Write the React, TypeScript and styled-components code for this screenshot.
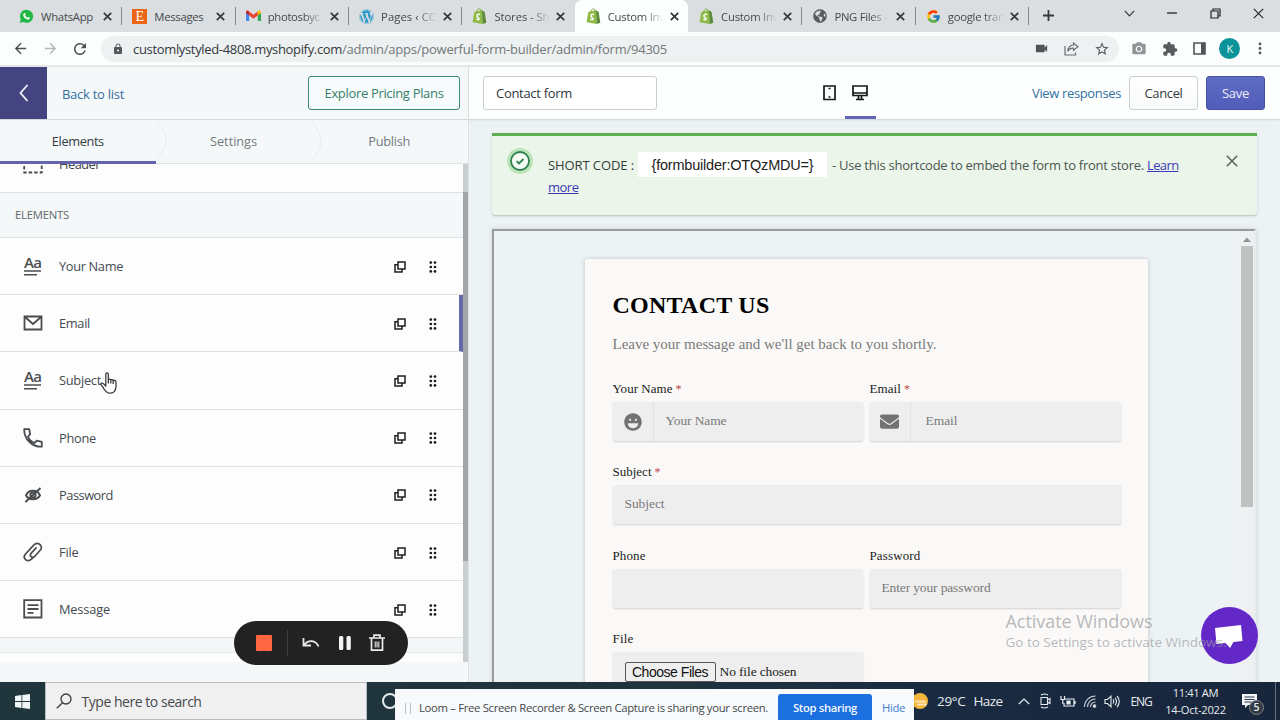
import React, { useLayoutEffect, useRef } from 'react';
import styled, { createGlobalStyle } from 'styled-components';
import { FaEnvelope, FaLaugh, FaWordpress, FaGlobeAmericas } from 'react-icons/fa';
import { FcGoogle } from 'react-icons/fc';
import { MdVideocam, MdCameraAlt, MdExtension, MdStarBorder, MdLock, MdRefresh, MdArrowBack, MdArrowForward } from 'react-icons/md';

const Global = createGlobalStyle`
  * { box-sizing: border-box; }
  body { margin: 0; font-family: 'Open Sans', 'Noto Sans', sans-serif; font-size: 13px; color: #3c4449; }
  svg { display: block; flex: none; }
`;

const FitSpan = styled.span`
  display: inline-block;
  white-space: pre;
  text-decoration: inherit;
`;

/* Text set to a given measure: tracking is computed from the natural width. */
function Fit({ w, children }: { w: number; children: string }) {
  const ref = useRef<HTMLSpanElement>(null);
  useLayoutEffect(() => {
    const el = ref.current;
    if (!el) return;
    el.style.letterSpacing = '0px';
    const natural = el.getBoundingClientRect().width;
    el.style.letterSpacing = `${(w - natural) / children.length}px`;
  }, [w, children]);
  return <FitSpan ref={ref}>{children}</FitSpan>;
}

const Screen = styled.div`
  position: relative;
  width: 1280px;
  height: 720px;
  overflow: hidden;
  display: flex;
  flex-direction: column;
  background: #edf3f4;
`;

/* ---------- browser ---------- */
const TabStrip = styled.div`
  flex: none;
  height: 32px;
  display: flex;
  padding-left: 8px;
  background: #dadee1;
`;
const Tab = styled.div<{ $active?: boolean; $line?: boolean }>`
  position: relative;
  flex: none;
  width: 113.350px;
  height: 32px;
  display: flex;
  align-items: center;
  padding-left: 11px;
  font-size: 11.300px;
  color: #45494d;
  border-radius: 7px 7px 0 0;
  background: ${p => (p.$active ? '#fdfefe' : 'transparent')};
  &::after {
    content: '';
    position: absolute;
    right: -1px;
    top: 7px;
    width: 1px;
    height: 18px;
    background: ${p => (p.$line ? '#84888b' : 'transparent')};
  }
`;
const TabIcon = styled.div`
  width: 15px;
  height: 16px;
  display: flex;
  align-items: center;
  justify-content: center;
`;
const TabTitle = styled.div<{ $fade?: boolean }>`
  width: 59px;
  margin-left: 7px;
  white-space: nowrap;
  ${p => p.$fade && 'mask-image: linear-gradient(90deg, #000 36px, transparent 56px);'}
`;
const TabClose = styled.div`
  margin-left: 3px;
`;
const EtsyMark = styled.div`
  width: 15px;
  height: 15px;
  background: #ec6512;
  color: #fff;
  font: 14px/15px 'Liberation Serif', serif;
  text-align: center;
`;
const NewTab = styled.div`
  padding: 10px 0 0 14.500px;
`;
const WindowButtons = styled.div`
  margin-left: auto;
  margin-right: 16px;
  height: 26px;
  display: flex;
  align-items: center;
  gap: 32.300px;
`;
const Toolbar = styled.div`
  flex: none;
  height: 35px;
  display: flex;
  align-items: center;
  background: #fcfefe;
  border-bottom: 2px solid #e3e7e8;
  color: #55595c;
`;
const NavIcons = styled.div`
  display: flex;
  align-items: center;
  gap: 12.500px;
  padding-left: 12px;
  width: 101px;
`;
const AddressBar = styled.div`
  width: 1018px;
  height: 26px;
  border-radius: 13px;
  margin-right: 12px;
  background: #eef1f1;
  display: flex;
  align-items: center;
  padding: 0 9px 0 11px;
  font-size: 13px;
  color: #72777a;
  b { font-weight: 400; color: #33383b; }
`;
const AddressText = styled.div`
  margin: 0 auto 0 9px;
  white-space: nowrap;
`;
const AddressIcons = styled.div`
  display: flex;
  align-items: center;
  gap: 15px;
`;
const ExtIcons = styled.div`
  display: flex;
  align-items: center;
  gap: 14.800px;
`;
const Avatar = styled.div`
  width: 21px;
  height: 21px;
  border-radius: 50%;
  background: #0c939a;
  color: #e8f7f7;
  font-size: 11px;
  line-height: 21px;
  text-align: center;
  margin: 0 -2px 0 -1px;
`;

function Bag() {
  return (
    <svg width="15" height="16" viewBox="0 0 15 16">
      <path d="M2.300 4 10 2.200 10.600 16 .6 14.200z" fill="#8dbb45" />
      <path d="M10 2.200 12.600 4l1.700 10.800-3.700 1.200z" fill="#5a8a35" />
      <path d="M4.400 5C4.600 2.600 6 .9 7.300.9c1.400 0 1.900 1.600 1.900 3" fill="none" stroke="#7daa3c" strokeWidth="1" />
      <path d="M8.100 6.600c-1.700-.8-3.200 0-3.200 1.400 0 1.600 2.400 1.600 2.300 2.900-.1 1.100-1.500 1.100-2.800.3" fill="none" stroke="#fff" strokeWidth="1.400" />
    </svg>
  );
}
function Gmail() {
  return (
    <svg width="15" height="12" viewBox="0 0 15 12">
      <path d="M0 1.500V11h3.200V4z" fill="#4285f4" />
      <path d="M15 1.500V11h-3.200V4z" fill="#34a853" />
      <path d="M3.200 1.400 7.500 4.700l4.300-3.300v4L7.500 8.700 3.200 5.400z" fill="#ea4335" />
      <path d="M0 2.200C0 .3 1.800-.2 3.200 1.400v4L0 3z" fill="#c5221f" />
      <path d="M15 2.200C15 .3 13.200-.2 11.800 1.400v4L15 3z" fill="#fbbc04" />
    </svg>
  );
}
function WhatsApp() {
  return (
    <svg width="15" height="15" viewBox="0 0 15 15">
      <path d="M7.600.8a6.500 6.500 0 0 1 0 13c-1.200 0-2.300-.3-3.200-.8L.8 14l1-3.500A6.500 6.500 0 0 1 7.600.8z" fill="#22b845" />
      <path d="M5 4.300c.5-.5 1-.4 1.200.1l.5 1.200-.6.9c.5 1 1.200 1.700 2.300 2.200l.9-.8 1.500.8c.2 1.300-.9 2-2 1.900C6.500 10.300 4.400 8 4.200 6.200c0-.8.3-1.400.8-1.900z" fill="#fff" />
    </svg>
  );
}
function Cross({ s = 9, c = '#33373a', w = 1.7 }: { s?: number; c?: string; w?: number }) {
  return (
    <svg width={s} height={s} viewBox={`0 0 ${s} ${s}`} stroke={c} strokeWidth={w}>
      <path d={`M.8.8 ${s - 0.8} ${s - 0.8}M${s - 0.8} .8 .8 ${s - 0.8}`} />
    </svg>
  );
}

const TABS: { icon: React.ReactNode; title: string; w: number; fade?: boolean; line?: boolean; active?: boolean }[] = [
  { icon: <WhatsApp />, title: 'WhatsApp', w: 52, line: true },
  { icon: <EtsyMark>E</EtsyMark>, title: 'Messages', w: 49, line: true },
  { icon: <Gmail />, title: 'photosbyc', w: 52, fade: true, line: true },
  { icon: <FaWordpress size={15} color="#2797c9" />, title: 'Pages ‹ CC', w: 55, fade: true, line: true },
  { icon: <Bag />, title: 'Stores - Sh', w: 55, fade: true },
  { icon: <Bag />, title: 'Custom Inv', w: 57, fade: true, active: true },
  { icon: <Bag />, title: 'Custom Inv', w: 57, fade: true, line: true },
  { icon: <FaGlobeAmericas size={14} color="#585c60" />, title: 'PNG Files -', w: 53, fade: true, line: true },
  { icon: <FcGoogle size={15} />, title: 'google tran', w: 57, fade: true, line: true },
];

function Browser() {
  return (
    <>
      <TabStrip>
        {TABS.map((t, i) => (
          <Tab key={i} $active={t.active} $line={t.line}>
            <TabIcon>{t.icon}</TabIcon>
            <TabTitle $fade={t.fade}><Fit w={t.w}>{t.title}</Fit></TabTitle>
            <TabClose><Cross /></TabClose>
          </Tab>
        ))}
        <NewTab>
          <svg width="11" height="11" stroke="#35393c" strokeWidth="1.800"><path d="M5.500 0v11M0 5.500h11" /></svg>
        </NewTab>
        <WindowButtons>
          <svg width="11" height="7" fill="none" stroke="#34383b" strokeWidth="1.200"><path d="M.8.800 5.500 5.800 10.200.8" /></svg>
          <svg width="10" height="2"><path d="M0 1h10" stroke="#222" strokeWidth="1.300" /></svg>
          <svg width="11" height="11" fill="none" stroke="#222" strokeWidth="1.200"><path d="M1 3h7v7H1zM3 3V1h7v7H8" /></svg>
          <Cross s={11} c="#222" w={1.1} />
        </WindowButtons>
      </TabStrip>
      <Toolbar>
        <NavIcons>
          <MdArrowBack size={17} color="#4c5053" />
          <MdArrowForward size={17} color="#b4b7b9" />
          <MdRefresh size={18} color="#4c5053" />
        </NavIcons>
        <AddressBar>
          <MdLock size={12} color="#54585b" />
          <AddressText>
            <b><Fit w={209}>customlystyled-4808.myshopify.com</Fit></b>
            <Fit w={325}>/admin/apps/powerful-form-builder/admin/form/94305</Fit>
          </AddressText>
          <AddressIcons>
            <MdVideocam size={15} color="#505457" />
            <svg width="15" height="14" viewBox="0 0 15 14" fill="none" stroke="#6b6f72" strokeWidth="1.200">
              <path d="M1 4v9h10.500v-2.500M9.500 1l4.500 3.700-4.500 3.600V6.200C7 6 5 7 3.800 9.300 4 5.600 6 3.300 9.500 3z" />
            </svg>
            <MdStarBorder size={16} color="#54585b" />
          </AddressIcons>
        </AddressBar>
        <ExtIcons>
          <MdCameraAlt size={16} color="#919496" />
          <MdExtension size={16} color="#585c5f" />
          <svg width="13" height="13"><path d="M1 1h11v11H1z" fill="none" stroke="#505457" strokeWidth="1.600" /><path d="M8 1h4v11H8z" fill="#505457" /></svg>
          <Avatar>K</Avatar>
          <svg width="14" height="13" fill="#54585b"><circle cx="7" cy="2" r="1.400" /><circle cx="7" cy="6.500" r="1.400" /><circle cx="7" cy="11" r="1.400" /></svg>
        </ExtIcons>
      </Toolbar>
    </>
  );
}

/* ---------- sidebar ---------- */
const Body = styled.div`
  height: 615px;
  display: flex;
`;
const Sidebar = styled.div`
  flex: none;
  width: 469px;
  display: flex;
  flex-direction: column;
  background: #f5f8f9;
  border-right: 1px solid #dce1e3;
`;
const SideHead = styled.div`
  flex: none;
  height: 53px;
  display: flex;
  align-items: center;
  border-bottom: 1px solid #d8dcdf;
  padding-right: 8px;
`;
const BackButton = styled.div`
  width: 47px;
  height: 52px;
  display: flex;
  align-items: center;
  justify-content: center;
  background: #444480;
`;
const BackLink = styled.div`
  margin: 1px auto 0 15px;
  color: #356f9f;
`;
const Button = styled.div<{ $kind?: 'primary' | 'outline' }>`
  height: 34px;
  display: flex;
  align-items: center;
  justify-content: center;
  border-radius: 3px;
  font-size: 13px;
  border: 1px solid ${p => (p.$kind === 'primary' ? '#4552a6' : p.$kind === 'outline' ? '#398870' : '#c9cfd3')};
  background: ${p => (p.$kind === 'primary' ? 'linear-gradient(#606bc3, #525dba)' : p.$kind === 'outline' ? '#f8fbfb' : 'linear-gradient(#fff, #f9fafb)')};
  color: ${p => (p.$kind === 'primary' ? '#eef0fc' : p.$kind === 'outline' ? '#35806a' : '#353c42')};
`;
const PricingButton = styled(Button)` width: 152px; `;
const CancelButton = styled(Button)` width: 69px; `;
const SaveButton = styled(Button)` width: 59px; `;
const SideTabs = styled.div`
  flex: none;
  height: 44px;
  display: flex;
  border-bottom: 1px solid #dfe3e6;
`;
const SideTab = styled.div<{ $active?: boolean }>`
  width: 155.700px;
  height: 44px;
  display: flex;
  align-items: center;
  justify-content: center;
  position: relative;
  font-size: 12.800px;
  color: ${p => (p.$active ? '#343c42' : '#747b80')};
  border-bottom: 3px solid ${p => (p.$active ? '#6265ad' : 'transparent')};
  svg { position: absolute; left: 100%; top: 0; }
`;
const ListArea = styled.div`
  height: 498px;
  flex: none;
  display: flex;
`;
const List = styled.div`
  width: 463px;
  overflow: hidden;
  background: #fdfdfd;
`;
const Scroll = styled.div`
  width: 5px;
  background: #c9cecf;
  padding-top: 28px;
`;
const ScrollThumb = styled.div`
  height: 369px;
  background: #a1a5a7;
`;
const HeaderRow = styled.div`
  height: 28px;
  display: flex;
  align-items: flex-end;
  gap: 16px;
  padding: 0 0 18px 23px;
  line-height: 18px;
  font-size: 12.800px;
  color: #40474c;
  span { margin-bottom: 1px; }
`;
const SectionTitle = styled.div`
  height: 46px;
  display: flex;
  align-items: center;
  padding: 0 0 2px 15px;
  background: #f5f8f9;
  border-top: 1px solid #dde1e3;
  border-bottom: 1px solid #dfe3e5;
  font-size: 11.300px;
  font-weight: 500;
  color: #5f676c;
`;
const Row = styled.div<{ $selected?: boolean }>`
  height: 57.200px;
  display: flex;
  align-items: center;
  padding: 0 ${p => (p.$selected ? 22.5 : 26.5)}px 0 23px;
  border-bottom: 1px solid #dfe2e4;
  border-right: ${p => (p.$selected ? '4px solid #6667a8' : '0')};
  font-size: 12.800px;
  color: #444b50;
`;
const RowLabel = styled.div`
  margin: 0 auto 0 16px;
`;
const RowTools = styled.div`
  display: flex;
  align-items: center;
  gap: 23px;
  padding-top: 1px;
`;
const SectionGap = styled.div`
  height: 15px;
  background: #f4f7f8;
  border-bottom: 1px solid #e3e6e8;
`;

const LINE = { fill: 'none', stroke: '#4a4d50', strokeWidth: 1.8 } as const;
const AaMark = styled.div`
  width: 20px;
  height: 20px;
  padding-left: 1px;
  font: 600 15px/12px 'Open Sans', sans-serif;
  color: #4c4f52;
  svg { margin-top: 2px; }
`;
const AaIcon = () => (
  <AaMark>
    <Fit w={17.5}>Aa</Fit>
    <svg width="18" height="6" {...LINE} strokeWidth={1.6}><path d="M0 1h17M0 4.800h13" /></svg>
  </AaMark>
);
const MailIcon = () => (
  <svg width="20" height="16" {...LINE}><path d="M1.500 1.500h17v13h-17zM2 2l8 7 8-7" /></svg>
);
const PhoneIcon = () => (
  <svg width="20" height="20" {...LINE} strokeLinejoin="round"><path d="M1.200 1.200h5l1 5L5 8.500c1 3 3.300 5.200 6.500 6.500l2.300-2.300 5 1.200v4.800C9 19 1 11 1.200 1.200z" /></svg>
);
const HiddenIcon = () => (
  <svg width="20" height="20" {...LINE} strokeWidth={2}>
    <path d="M3 10.300C5.500 4.300 14.500 4.300 17 10.300 14.500 15.500 5.500 15.500 3 10.300z" />
    <circle cx="10" cy="10" r="2.600" /><path d="M2.500 17 17.500 3" />
  </svg>
);
const ClipIcon = () => (
  <svg width="20" height="20" viewBox="0 0 20 20" {...LINE} strokeWidth={1.700} strokeLinecap="round" strokeLinejoin="round">
    <path d="m10.500 15.200-2 2c-4.300 3.800-9.500-1-6-5.200l8-8.700c4.200-4.300 10.500.5 6.700 5l-5.400 6c-2.700 2.500-5.800-.4-3.700-2.900l5-5.500" />
  </svg>
);
const MessageIcon = () => (
  <svg width="20" height="20" {...LINE}><path d="M1.200 1.200h17.300v17.300H1.200zM4.500 6.200h11M4.500 10h11M4.500 13.800h6" /></svg>
);
const CopyIcon = () => (
  <svg width="12" height="12" fill="none" stroke="#1c1e20" strokeWidth="1.500"><path d="M4 1h7v7H4zM3.800 3.800H1V11h7V8.200" /></svg>
);
const DragIcon = () => (
  <svg width="8" height="12" fill="#1a1c1e">
    {[1.6, 6, 10.4].map(y => [1.8, 6].map(x => <circle key={`${x}-${y}`} cx={x} cy={y} r="1.350" />))}
  </svg>
);

const FIELDS: [React.ReactNode, string, number][] = [
  [<AaIcon />, 'Your Name', 64],
  [<MailIcon />, 'Email', 31],
  [<AaIcon />, 'Subject', 42],
  [<PhoneIcon />, 'Phone', 37],
  [<HiddenIcon />, 'Password', 54],
  [<ClipIcon />, 'File', 19.5],
  [<MessageIcon />, 'Message', 51],
];

const Chevron = () => (
  <svg width="14" height="42" viewBox="0 0 14 42" fill="none" stroke="#e9edef"><path d="M0 0c7 10 10 15 10 21S7 32 0 42" /></svg>
);

function SidePanel() {
  return (
    <Sidebar>
      <SideHead>
        <BackButton>
          <svg width="10" height="18" fill="none" stroke="#f1f1fb" strokeWidth="1.800"><path d="M8.500 1 1.500 9l7 8" /></svg>
        </BackButton>
        <BackLink><Fit w={62}>Back to list</Fit></BackLink>
        <PricingButton $kind="outline"><Fit w={119}>Explore Pricing Plans</Fit></PricingButton>
      </SideHead>
      <SideTabs>
        <SideTab $active><Fit w={52}>Elements</Fit><Chevron /></SideTab>
        <SideTab><Fit w={47}>Settings</Fit><Chevron /></SideTab>
        <SideTab><Fit w={42}>Publish</Fit></SideTab>
      </SideTabs>
      <ListArea>
        <List>
          <HeaderRow>
            <svg width="20" height="20" fill="none" stroke="#4a4d50" strokeWidth="1.800" strokeDasharray="3.500 2"><path d="M1.200 1v17.500h17.500V1" /></svg>
            <Fit w={41}>Header</Fit>
          </HeaderRow>
          <SectionTitle><Fit w={54}>ELEMENTS</Fit></SectionTitle>
          {FIELDS.map(([icon, label, w]) => (
            <Row key={label} $selected={label === 'Email'}>
              {icon}
              <RowLabel><Fit w={w}>{label}</Fit></RowLabel>
              <RowTools><CopyIcon /><DragIcon /></RowTools>
            </Row>
          ))}
          <SectionGap />
        </List>
        <Scroll><ScrollThumb /></Scroll>
      </ListArea>
    </Sidebar>
  );
}

/* ---------- main ---------- */
const Main = styled.div`
  flex: 1;
  display: flex;
  flex-direction: column;
`;
const MainHead = styled.div`
  flex: none;
  height: 53px;
  display: flex;
  align-items: center;
  padding: 0 15px 0 14px;
  background: #fdfefe;
  border-bottom: 1px solid #d5dadd;
  box-shadow: 0 1px 2px rgba(0, 0, 0, 0.05);
`;
const NameInput = styled.div`
  width: 174px;
  height: 34px;
  padding-left: 12px;
  display: flex;
  align-items: center;
  border: 1px solid #c8ced2;
  border-radius: 3px;
  background: #fff;
  color: #30373c;
`;
const Devices = styled.div`
  display: flex;
  height: 52px;
  margin: 0 auto 0 156.500px;
`;
const Device = styled.div<{ $active?: boolean }>`
  width: 31px;
  height: 52px;
  padding-top: 2px;
  display: flex;
  align-items: center;
  justify-content: center;
  border-bottom: 3px solid ${p => (p.$active ? '#6064b4' : 'transparent')};
`;
const ViewLink = styled.div`
  margin-right: 8px;
  color: #33719f;
`;
const HeadButtons = styled.div`
  display: flex;
  gap: 8px;
`;
const Content = styled.div`
  height: 562px;
  overflow: hidden;
  padding: 13px 23px 0 23px;
  display: flex;
  flex-direction: column;
`;
const Banner = styled.div`
  flex: none;
  height: 82px;
  display: flex;
  align-items: flex-start;
  border-top: 3px solid #5fb052;
  border-radius: 0 0 3px 3px;
  background: #ebf5e9;
  box-shadow: 0 1px 1px rgba(60, 80, 70, 0.16), 0 1px 3px rgba(60, 70, 80, 0.18);
  color: #4c5553;
`;
const BannerIcon = styled.div`
  width: 56px;
  padding: 12px 0 0 15px;
`;
const BannerText = styled.div`
  flex: 1;
  padding-top: 16px;
`;
const BannerLine = styled.div`
  display: flex;
  align-items: center;
  height: 25px;
  white-space: nowrap;
`;
const SecondLine = styled(BannerLine)`
  height: 19px;
`;
const Strong = styled.span`
  font-weight: 500;
  color: #333d3b;
`;
const Code = styled.div`
  width: 189px;
  height: 25px;
  margin: 0 5px 0 4px;
  background: #fff;
  display: flex;
  align-items: center;
  justify-content: center;
  font: 14.500px 'Liberation Sans', sans-serif;
  color: #1d2221;
`;
const DocLink = styled.span`
  color: #3a3cb5;
  text-decoration: underline;
`;
const BannerClose = styled.div`
  padding: 19px 19px 0 0;
`;
const Frame = styled.div`
  flex: 1;
  margin: 14px 1px 0 0;
  border: 2px solid #989c9e;
  border-right-color: #e8ecee;
  border-bottom: 0;
  display: flex;
  justify-content: space-between;
  box-shadow: 0 0 5px rgba(60, 80, 90, 0.2);
`;
const FrameBody = styled.div`
  flex: 1;
  display: flex;
  justify-content: center;
  padding: 28px 1px 0 0;
  overflow: hidden;
`;
const FrameScroll = styled.div`
  width: 15px;
  background: #eff0f1;
  display: flex;
  flex-direction: column;
  align-items: center;
  justify-content: space-between;
  padding: 6px 0 7px;
`;
const FrameThumb = styled.div`
  width: 12px;
  height: 261px;
  background: #c0c1c1;
  margin: 4px 0 auto;
`;
const Card = styled.div`
  width: 563px;
  height: 600px;
  padding: 0 27px 0 28px;
  background: #faf9f7;
  border-radius: 2px;
  box-shadow: 0 0 4px rgba(60, 70, 80, 0.28);
  font-family: 'Liberation Serif', serif;
  color: #1c1c1c;
`;
const FormTitle = styled.div`
  padding-top: 31px;
  font-size: 24px;
  line-height: 31px;
  font-weight: 700;
  color: #000;
`;
const FormSub = styled.div`
  padding-top: 13px;
  font-size: 15px;
  line-height: 20px;
  color: #7a7a7a;
`;
const FormGrid = styled.div`
  display: grid;
  grid-template-columns: 250px 251px;
  column-gap: 7px;
  padding-top: 19px;
`;
const Field = styled.div<{ $wide?: boolean }>`
  grid-column: ${p => (p.$wide ? '1 / 3' : 'auto')};
  height: 83.400px;
`;
const FieldLabel = styled.div`
  height: 29px;
  line-height: 31px;
  font-size: 13px;
  i { color: #c0454a; font-style: normal; font-size: 12px; }
`;
const Input = styled.div`
  height: 39px;
  display: flex;
  align-items: center;
  background: #eeeeee;
  border-radius: 2px;
  box-shadow: 0 1px 2px rgba(0, 0, 0, 0.16);
  font-size: 13.500px;
  color: #7a7a7a;
`;
const Addon = styled.div`
  width: 41px;
  height: 39px;
  display: flex;
  align-items: center;
  justify-content: center;
  border-right: 1px solid #e2e2e2;
`;
const Placeholder = styled.div<{ $pad?: number }>`
  padding-left: ${p => p.$pad ?? 12}px;
  padding-bottom: 1px;
`;
const FileButton = styled.div`
  margin: 0 4px 0 12px;
  width: 91px;
  height: 20px;
  border: 1px solid #555;
  border-radius: 2px;
  background: #efefef;
  display: flex;
  align-items: center;
  justify-content: center;
  font: 14px 'Liberation Sans', sans-serif;
  color: #111;
`;
const FileText = styled.div`
  color: #222;
`;

function TextField({ label, lw, required, wide, icon, text, tw = 0, pad, children }: {
  label: string; lw: number; required?: boolean; wide?: boolean; icon?: React.ReactNode; text?: string; tw?: number; pad?: number; children?: React.ReactNode;
}) {
  return (
    <Field $wide={wide}>
      <FieldLabel><Fit w={lw}>{label}</Fit>{required && <i> *</i>}</FieldLabel>
      <Input>
        {icon && <Addon>{icon}</Addon>}
        {text && <Placeholder $pad={pad}><Fit w={tw}>{text}</Fit></Placeholder>}
        {children}
      </Input>
    </Field>
  );
}

function MainPanel() {
  return (
    <Main>
      <MainHead>
        <NameInput><Fit w={76}>Contact form</Fit></NameInput>
        <Devices>
          <Device>
            <svg width="13" height="16" fill="none" stroke="#161819" strokeWidth="1.700"><path d="M1 1h11v13.500H1z" /><path d="M5.500 3.500h2M5.500 12h2" strokeWidth="1.300" /></svg>
          </Device>
          <Device $active>
            <svg width="16" height="16" fill="none" stroke="#161819" strokeWidth="1.700"><path d="M1 1h14v9.500H1zM1 8h14M6.500 11v3M9.500 11v3M4 14.500h8" /></svg>
          </Device>
        </Devices>
        <ViewLink><Fit w={89}>View responses</Fit></ViewLink>
        <HeadButtons>
          <CancelButton><Fit w={38}>Cancel</Fit></CancelButton>
          <SaveButton $kind="primary"><Fit w={27}>Save</Fit></SaveButton>
        </HeadButtons>
      </MainHead>
      <Content>
        <Banner>
          <BannerIcon>
            <svg width="26" height="26"><circle cx="13" cy="13" r="13" fill="#bce4b8" /><circle cx="13" cy="13" r="9" fill="#f4fbf3" stroke="#2d8150" strokeWidth="1.800" /><path d="m9.500 13.200 2.500 2.300 4.500-4.500" fill="none" stroke="#2d8150" strokeWidth="1.800" /></svg>
          </BannerIcon>
          <BannerText>
            <BannerLine>
              <Strong><Fit w={86}>SHORT CODE :</Fit></Strong>
              <Code><Fit w={162}>{'{formbuilder:OTQzMDU=}'}</Fit></Code>
              <Fit w={315}>{'- Use this shortcode to embed the form to front store. '}</Fit>
              <DocLink><Fit w={31.5}>Learn</Fit></DocLink>
            </BannerLine>
            <SecondLine><DocLink><Fit w={30.5}>more</Fit></DocLink></SecondLine>
          </BannerText>
          <BannerClose><Cross s={12} c="#5b6462" w={1.6} /></BannerClose>
        </Banner>
        <Frame>
          <FrameBody>
            <Card>
              <FormTitle><Fit w={157}>CONTACT US</Fit></FormTitle>
              <FormSub><Fit w={324}>Leave your message and we'll get back to you shortly.</Fit></FormSub>
              <FormGrid>
                <TextField label="Your Name" lw={60} required icon={<FaLaugh size={18} color="#727272" />} text="Your Name" tw={61} />
                <TextField label="Email" lw={31.5} required icon={<FaEnvelope size={19} color="#727272" />} text="Email" tw={32} pad={15} />
                <TextField label="Subject" lw={39} required wide text="Subject" tw={40} />
                <TextField label="Phone" lw={33} />
                <TextField label="Password" lw={51} text="Enter your password" tw={109} />
                <TextField label="File" lw={21}>
                  <FileButton><Fit w={76}>Choose Files</Fit></FileButton>
                  <FileText><Fit w={77}>No file chosen</Fit></FileText>
                </TextField>
              </FormGrid>
            </Card>
          </FrameBody>
          <FrameScroll>
            <svg width="8" height="5"><path d="M0 5 4 .5 8 5z" fill="#8f9496" /></svg>
            <FrameThumb />
            <svg width="8" height="5"><path d="M0 0 4 4.500 8 0z" fill="#454849" /></svg>
          </FrameScroll>
        </Frame>
      </Content>
    </Main>
  );
}

/* ---------- taskbar ---------- */
const Taskbar = styled.div`
  flex: none;
  height: 38px;
  display: flex;
  align-items: center;
  background: linear-gradient(90deg, #20363c, #20333d 50%, #192a41 75%, #18263c);
  color: #e6ebef;
`;
const Start = styled.div`
  width: 45px;
  display: flex;
  justify-content: center;
`;
const Search = styled.div`
  width: 322px;
  height: 38px;
  display: flex;
  align-items: center;
  gap: 9.500px;
  padding-left: 10px;
  background: #f0f0f0;
  border: 1px solid #b9bdbf;
  color: #474a4c;
  font-size: 14px;
`;
const Cortana = styled.div`
  width: 16px;
  height: 16px;
  margin-left: 15px;
  border: 2px solid #e3eaec;
  border-radius: 50%;
`;
const Tray = styled.div`
  margin-left: auto;
  display: flex;
  align-items: center;
  height: 38px;
  font-size: 13.500px;
`;
const Weather = styled.div`
  display: flex;
  align-items: center;
  gap: 8px;
  width: 104.500px;
`;
const TrayIcons = styled.div`
  display: flex;
  align-items: center;
  gap: 7px;
  width: 113px;
`;
const Lang = styled.div`
  width: 34.500px;
  font-size: 12px;
`;
const Clock = styled.div`
  width: 61px;
  margin-right: 16px;
  font-size: 11.200px;
  line-height: 17px;
  text-align: center;
`;
const Notify = styled.div`
  position: relative;
  width: 34px;
  height: 38px;
  padding-top: 12px;
  border-right: 1px solid #65707e;
  margin-right: 4px;
`;
const Count = styled.div`
  position: absolute;
  left: 7px;
  top: 18px;
  width: 15px;
  height: 15px;
  border-radius: 50%;
  background: #333b44;
  border: 1px solid #7c8288;
  font-size: 10.500px;
  line-height: 13px;
  font-weight: 600;
  text-align: center;
`;

function WindowsTaskbar() {
  return (
    <Taskbar>
      <Start>
        <svg width="15" height="15" fill="#f2f6f7"><path d="M0 2 6.500 1.100v6H0zM7.300 1 15 0v7.100H7.300zM0 7.900h6.500v6L0 13zM7.300 7.900H15V15l-7.700-1z" /></svg>
      </Start>
      <Search>
        <svg width="16" height="16" fill="none" stroke="#3a3d3f" strokeWidth="1.300"><circle cx="10" cy="6" r="5" /><path d="M6.500 9.700.8 15.300" /></svg>
        <Fit w={120}>Type here to search</Fit>
      </Search>
      <Cortana />
      <Tray>
        <Weather>
          <svg width="16" height="18"><circle cx="7" cy="9" r="8" fill="#f3b73c" /><path d="M3 9.500h9M5 12.500h8" stroke="#fae3b4" strokeWidth="2" strokeLinecap="round" /></svg>
          <Fit w={28.5}>29°C</Fit>
          <Fit w={29}>Haze</Fit>
        </Weather>
        <TrayIcons>
          <svg width="12" height="7" fill="none" stroke="#e6ebef" strokeWidth="1.200"><path d="M.8 6 6 1l5.200 5" /></svg>
          <svg width="16" height="16" fill="none" stroke="#e6ebef" strokeWidth="1.100"><path d="M4 2c2-1.200 5-1.200 7 0M4 14c2 1.200 5 1.200 7 0M4 4.500h6.500v7H4zM10.500 7 13 5.500v5L10.500 9" /></svg>
          <svg width="16" height="13" fill="none" stroke="#e6ebef" strokeWidth="1.200"><path d="M5 4h9v7H4V8M15 6v3" /><path d="M7 6h3v3H7z" fill="#e6ebef" /><path d="M1 1v3.500h3.500V1M2.800 5v4" /></svg>
          <svg width="14" height="14" fill="none" stroke="#c9d1d8" strokeWidth="1.100"><path d="M1.500 13C1.500 6.500 6.500 2 12.500 2M4.500 13c0-4.500 3.500-8 8-8M7.500 13c0-3 2.200-5 5-5" /><circle cx="11.500" cy="12" r="1.300" fill="#e6ebef" /></svg>
          <svg width="16" height="13" fill="none" stroke="#e6ebef" strokeWidth="1.100"><path d="M1 4.500h2.500L7 1.200v10.600L3.500 8.500H1zM9 4.500c1 1 1 3 0 4M11 2.800c2 2 2 5.400 0 7.400M13 1c3 3 3 8 0 11" /></svg>
        </TrayIcons>
        <Lang><Fit w={21}>ENG</Fit></Lang>
        <Clock><Fit w={45.5}>11:41 AM</Fit><Fit w={60.5}>14-Oct-2022</Fit></Clock>
        <Notify>
          <svg width="15" height="15"><path d="M0 0h15v11H6l-3 3v-3H0z" fill="#f2f5f7" /><path d="M2.500 3h10M2.500 5.500h10M2.500 8h7" stroke="#2a3747" /></svg>
          <Count>5</Count>
        </Notify>
      </Tray>
    </Taskbar>
  );
}

/* ---------- floating parts ---------- */
const Recorder = styled.div`
  position: absolute;
  left: 234px;
  top: 621px;
  width: 174px;
  height: 44px;
  border-radius: 22px;
  background: #222;
  display: flex;
  align-items: center;
  padding-left: 22px;
`;
const StopSquare = styled.div`
  width: 16px;
  height: 16px;
  border-radius: 1px;
  background: #ff6742;
`;
const RecDivider = styled.div`
  width: 1px;
  height: 26px;
  margin: 0 14px 0 15px;
  background: #3c3c3c;
`;
const RecIcons = styled.div`
  display: flex;
  align-items: center;
  gap: 18.500px;
`;
const Pointer = styled.div`
  position: absolute;
  left: 100px;
  top: 372px;
`;
const Chat = styled.div`
  position: absolute;
  left: 1201px;
  top: 607px;
  width: 57px;
  height: 57px;
  border-radius: 50%;
  background: #6528c8;
  padding: 18px 0 0 14px;
`;
const Watermark = styled.div`
  position: absolute;
  left: 1005.500px;
  top: 608.500px;
  color: rgba(150, 152, 156, 0.68);
  white-space: nowrap;
`;
const MarkTitle = styled.div`
  font-size: 18px;
  line-height: 24px;
`;
const MarkText = styled.div`
  font-size: 13.500px;
  line-height: 18px;
`;
const ShareBar = styled.div`
  position: absolute;
  left: 395px;
  top: 689px;
  width: 519px;
  height: 31px;
  display: flex;
  background: #f7f9fa;
  padding: 5px 0 0 10px;
  font-size: 11.300px;
  line-height: 28px;
  color: #44494c;
`;
const Grip = styled.div`
  width: 6px;
  height: 11px;
  margin: 9px 8px 0 0;
  border: solid #bbc0c2;
  border-width: 0 1.500px;
`;
const StopButton = styled.div`
  width: 94px;
  margin: 0 10px 0 10px;
  height: 29px;
  border-radius: 3px 3px 0 0;
  background: #1b6fde;
  color: #f3f8ff;
  font-weight: 600;
  text-align: center;
`;
const HideLink = styled.div`
  color: #3f7fda;
`;

export default function App() {
  return (
    <Screen>
      <Global />
      <Browser />
      <Body>
        <SidePanel />
        <MainPanel />
      </Body>
      <WindowsTaskbar />
      <Recorder>
        <StopSquare />
        <RecDivider />
        <RecIcons>
          <svg width="18" height="14" fill="none" stroke="#e9e9e9" strokeWidth="1.800"><path d="M1.500 2v7.500H9M2 9C6 3.500 13.500 3.500 16.500 10.500" /></svg>
          <svg width="12" height="14" fill="#f4f4f4"><rect width="4.300" height="14" rx="1.500" /><rect x="7.500" width="4.300" height="14" rx="1.500" /></svg>
          <svg width="16" height="18" fill="none" stroke="#ececec" strokeWidth="1.700"><path d="M0 4h16M5 3.500V1.200h6v2.300M2.500 4.500v11.700h11V4.500" /><path d="M6.200 7.500V13.500M8 7.500V13.500M9.800 7.500V13.500" strokeWidth="1.100" /></svg>
        </RecIcons>
      </Recorder>
      <Pointer>
        <svg width="18" height="23" fill="#fff" stroke="#2c2e30" strokeWidth="1.200" strokeLinejoin="round">
          <path d="M5.800 14V2.300c0-1.900 2.500-1.900 2.500 0v5.400c.4-1 2.300-.9 2.500.4.500-.9 2.200-.6 2.400.6.700-.7 2.600-.4 2.800 1v5.300c-.4 4-3 6.200-5.800 6.200-3.500 0-5-2.200-6.700-5L1 12.500c-.6-1.500 1.200-2 2.300-.9z" />
          <path d="M8.300 8v3.500M10.800 8.500v3M13.200 9v3" fill="none" />
        </svg>
      </Pointer>
      <Chat>
        <svg width="30" height="26" fill="#fff"><path d="m0 3 26-3L27.500 16l-9 1-3.500 6-4.500-5L1.500 19z" /></svg>
      </Chat>
      <Watermark>
        <MarkTitle><Fit w={147}>Activate Windows</Fit></MarkTitle>
        <MarkText><Fit w={221}>Go to Settings to activate Windows.</Fit></MarkText>
      </Watermark>
      <ShareBar>
        <Grip />
        <Fit w={349}>Loom – Free Screen Recorder &amp; Screen Capture is sharing your screen.</Fit>
        <StopButton><Fit w={64}>Stop sharing</Fit></StopButton>
        <HideLink><Fit w={23}>Hide</Fit></HideLink>
      </ShareBar>
    </Screen>
  );
}
